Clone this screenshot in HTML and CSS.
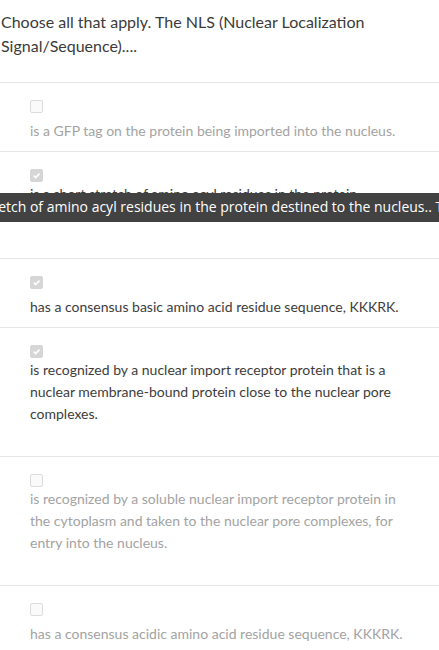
FILE: index.html
```html
<!DOCTYPE html>
<html lang="en">
<head>
    <meta charset="UTF-8">
    <meta name="viewport" content="width=device-width, initial-scale=1.0">
    <title>Question</title>
    <link rel="stylesheet" href="styles.css">
</head>
<body>
    <div class="question">
        <div class="question-text">Choose all that apply. The NLS (Nuclear Localization Signal/Sequence)....</div>
        <div class="answers">
            <label class="answer">
                <span class="box"></span>
                <span class="answer-text single">is a GFP tag on the protein being imported into the nucleus.</span>
            </label>
            <label class="answer checked">
                <span class="box"><svg viewBox="0 0 12 12"><path d="M3 6.2 L5.1 8.3 L9.2 3.9"/></svg></span>
                <span class="answer-text multi">is a short stretch of amino acyl residues in the protein destined to the nucleus..</span>
                <span class="tooltip">is a short stretch of amino acyl residues in the protein destined to the nucleus.. This</span>
            </label>
            <label class="answer checked">
                <span class="box"><svg viewBox="0 0 12 12"><path d="M3 6.2 L5.1 8.3 L9.2 3.9"/></svg></span>
                <span class="answer-text single">has a consensus basic amino acid residue sequence, KKKRK.</span>
            </label>
            <label class="answer checked">
                <span class="box"><svg viewBox="0 0 12 12"><path d="M3 6.2 L5.1 8.3 L9.2 3.9"/></svg></span>
                <span class="answer-text multi">is recognized by a nuclear import receptor protein that is a nuclear membrane-bound protein close to the nuclear pore complexes.</span>
            </label>
            <label class="answer">
                <span class="box"></span>
                <span class="answer-text multi">is recognized by a soluble nuclear import receptor protein in the cytoplasm and taken to the nuclear pore complexes, for entry into the nucleus.</span>
            </label>
            <label class="answer">
                <span class="box"></span>
                <span class="answer-text single">has a consensus acidic amino acid residue sequence, KKKRK.</span>
            </label>
        </div>
    </div>
</body>
</html>
```

FILE: styles.css
```css
body {
    margin: 0;
    font-family: Lato, "Open Sans", sans-serif;
    background-color: #fff;
    color: #3d3d3d;
}
.question {
    position: relative;
    overflow: hidden;
}
.question-text {
    font-size: 16px;
    line-height: 24px;
    padding: 10px 60px 24px 1px;
    color: #3b3b3b;
    border-bottom: 1px solid #e6e6e6;
}
.answer {
    display: block;
    position: relative;
    padding: 17px 30px 0 30px;
    border-bottom: 1px solid #e6e6e6;
    color: #a3a3a3;
}
.answer.checked {
    color: #3d3d3d;
}
.box {
    display: block;
    width: 11px;
    height: 11px;
    border: 1px solid #dcdcdc;
    border-radius: 2px;
    background-color: #fafafa;
}
.answer.checked .box {
    background-color: #d6d6d6;
    border-color: #d6d6d6;
}
.box svg {
    display: block;
    width: 11px;
    height: 11px;
}
.box path {
    fill: none;
    stroke: #fff;
    stroke-width: 1.8;
}
.answer-text {
    display: block;
    font-size: 14px;
    line-height: 22px;
}
.answer-text.single {
    margin-top: 7px;
    padding-bottom: 9px;
}
.answer-text.multi {
    margin-top: 1px;
    padding-bottom: 31px;
}
.tooltip {
    position: absolute;
    top: 41px;
    right: -27px;
    height: 29px;
    line-height: 28px;
    padding: 0 4px;
    white-space: nowrap;
    background-color: #424242;
    color: #fff;
    font-family: "Open Sans", sans-serif;
    font-size: 14px;
}
```
